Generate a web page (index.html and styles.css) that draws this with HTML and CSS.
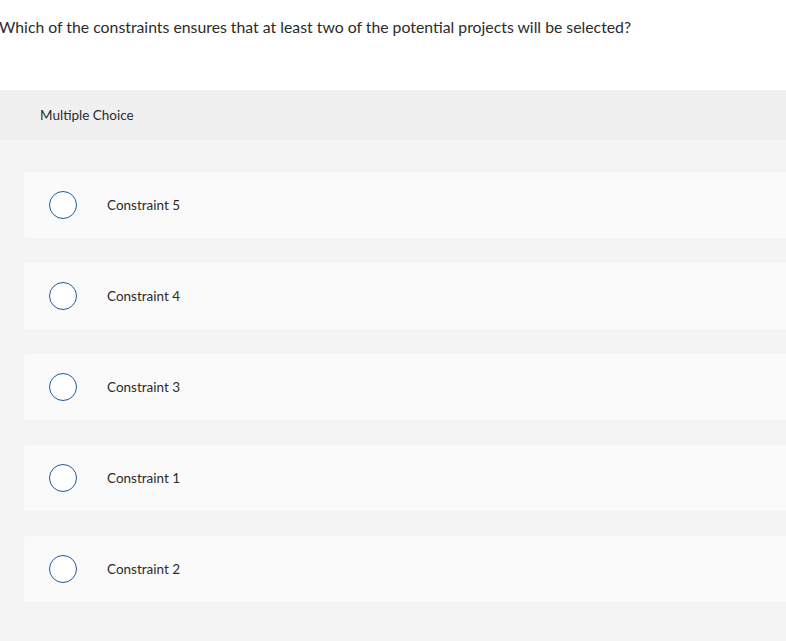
FILE: index.html
```html
<!DOCTYPE html>
<html lang="en">
<head>
    <meta charset="UTF-8">
    <meta name="viewport" content="width=device-width, initial-scale=1.0">
    <title>Multiple Choice</title>
    <link rel="stylesheet" href="styles.css">
</head>
<body>
    <div class="question">
        <p>Which of the constraints ensures that at least two of the potential projects will be selected?</p>
    </div>

    <div class="choice-header">Multiple Choice</div>

    <div class="choices">
        <label class="choice">
            <span class="radio"></span>
            <span class="choice-text">Constraint 5</span>
        </label>
        <label class="choice">
            <span class="radio"></span>
            <span class="choice-text">Constraint 4</span>
        </label>
        <label class="choice">
            <span class="radio"></span>
            <span class="choice-text">Constraint 3</span>
        </label>
        <label class="choice">
            <span class="radio"></span>
            <span class="choice-text">Constraint 1</span>
        </label>
        <label class="choice">
            <span class="radio"></span>
            <span class="choice-text">Constraint 2</span>
        </label>
    </div>
</body>
</html>
```

FILE: styles.css
```css
:root {
    --text-color: #2b2b2b;
    --header-bg: #f0f0f0;
    --area-bg: #f4f4f4;
    --card-bg: #fafafa;
    --radio-color: #1d5a9c;
}

body {
    margin: 0;
    font-family: 'Lato', 'Liberation Sans', sans-serif;
    color: var(--text-color);
    background: #ffffff;
    overflow: hidden;
}

.question {
    height: 90px;
    box-sizing: border-box;
    padding-top: 15px;
}

.question p {
    margin: 0 0 0 -1px;
    font-size: 15.8px;
    line-height: 24px;
    white-space: nowrap;
}

.choice-header {
    height: 50px;
    line-height: 50px;
    padding-left: 40px;
    background: var(--header-bg);
    font-size: 13.5px;
}

.choices {
    background: var(--area-bg);
    padding: 32px 0 40px 24px;
    display: flex;
    flex-direction: column;
    gap: 25px;
}

.choice {
    display: flex;
    align-items: center;
    height: 66px;
    background: var(--card-bg);
    border-radius: 4px 0 0 4px;
    cursor: pointer;
}

.radio {
    width: 28px;
    height: 28px;
    box-sizing: border-box;
    border: 1.5px solid var(--radio-color);
    border-radius: 50%;
    background: #ffffff;
    margin-left: 25px;
    flex-shrink: 0;
}

.choice-text {
    margin-left: 30px;
    font-size: 13.5px;
}
```
